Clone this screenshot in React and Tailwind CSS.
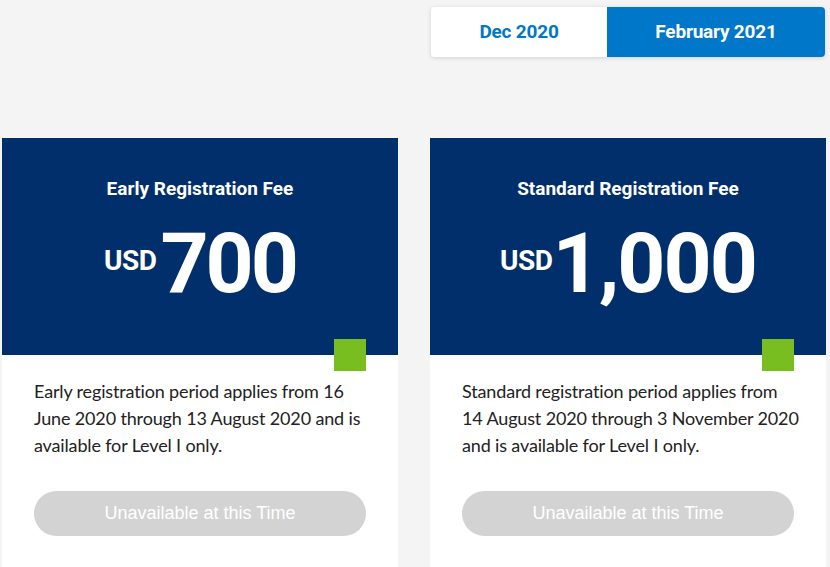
import React from "react";

const head = { fontFamily: "Roboto, 'Liberation Sans', sans-serif" };
const body = { fontFamily: "Lato, 'Liberation Sans', sans-serif" };
const arial = { fontFamily: "'Liberation Sans', Arial, sans-serif" };

function Card({ title, amount, text, usdGap, amountTrack }) {
  return (
    <div className="w-[396px] bg-white flex flex-col">
      <div className="relative bg-[#012f6b] h-[217px] flex flex-col items-center pt-[38px]">
        <div style={head} className="text-white font-bold text-[19px] leading-[26px]">
          {title}
        </div>
        <div className="flex items-start mt-[20px]" style={head}>
          <span className={`text-white font-bold text-[28px] leading-none mt-[25px] tracking-[-0.5px] ${usdGap}`}>USD</span>
          <span className={`text-white font-bold text-[84px] leading-none ${amountTrack}`}>{amount}</span>
        </div>
        <div className="absolute right-[32px] bottom-[-16px] w-[32px] h-[32px] bg-[#78be20]" />
      </div>
      <div className="px-[32px] pt-[23px] pb-[40px]">
        <p style={body} className="text-[#222222] text-[18px] leading-[27px] tracking-[-0.15px] w-[340px]">
          {text}
        </p>
        <div
          style={arial}
          className="mt-[32px] h-[45px] rounded-full bg-[#d3d3d3] flex items-center justify-center text-white text-[18px]"
        >
          Unavailable at this Time
        </div>
      </div>
    </div>
  );
}

export default function App() {
  return (
    <div className="w-[830px] h-[567px] overflow-hidden bg-[#f4f4f4]">
      <div className="flex justify-end pr-[5px] pt-[7px]">
        <div className="flex rounded-[4px] overflow-hidden shadow-[0_1px_4px_rgba(0,0,0,0.15)]" style={head}>
          <div className="w-[176px] h-[50px] bg-white flex items-center justify-center text-[#0077c8] font-bold text-[19px] tracking-[-0.2px]">
            Dec 2020
          </div>
          <div className="w-[218px] h-[50px] bg-[#0077c8] flex items-center justify-center text-white font-bold text-[19px] tracking-[-0.2px]">
            February 2021
          </div>
        </div>
      </div>
      <div className="flex gap-[32px] pl-[2px] mt-[81px]">
        <Card
          title="Early Registration Fee"
          amount="700"
          usdGap="mr-[4px]"
          amountTrack="tracking-[-3px]"
          text="Early registration period applies from 16 June 2020 through 13 August 2020 and is available for Level I only."
        />
        <Card
          title="Standard Registration Fee"
          amount="1,000"
          usdGap="mr-0"
          amountTrack="tracking-[-2px]"
          text="Standard registration period applies from 14 August 2020 through 3 November 2020 and is available for Level I only."
        />
      </div>
    </div>
  );
}
